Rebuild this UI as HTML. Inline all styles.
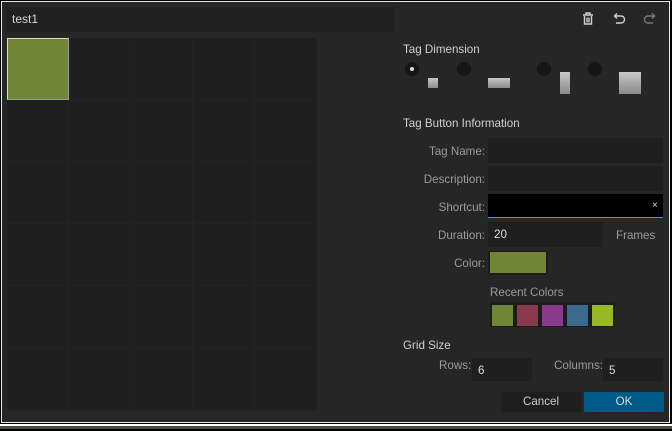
<!DOCTYPE html>
<html><head><style>
*{margin:0;padding:0;box-sizing:border-box}
body{width:672px;height:431px;background:#000;font-family:"Liberation Sans",sans-serif;font-size:11.6px;color:#b4b4b4;position:relative;overflow:hidden}
.win{position:absolute;left:1px;top:1px;width:669px;height:422px;border:1px solid #e8e8e8;background:#262626}
.a{position:absolute}
.in{position:absolute;background:#1f1f1f}
.lbl{position:absolute;text-align:right;color:#9a9a9a;width:100px}
.cell{position:absolute;width:61px;height:61px;background:#1f1f1f}
.sw{position:absolute;width:21px;height:21px;top:305px}
.dot{position:absolute;width:14px;height:14px;border-radius:50%;background:#161616}
.rect{position:absolute;background:linear-gradient(#c8c8c8,#8a8a8a)}
</style></head><body>
<div class="win"></div>
<div class="a" style="left:0;top:424px;width:672px;height:2px;background:#fff"></div>
<div class="a" style="left:0;top:426px;width:672px;height:3px;background:#4a4e3a"></div>
<div class="in" style="left:6px;top:7px;width:388px;height:25px;background:#202020"></div>
<div class="a" style="left:12px;top:12px;color:#d8d8d8;font-size:12px">test1</div>
<div class="a" style="left:7px;top:38px;width:311px;height:373px;background:#232323"></div>
<div id="g"></div>
<script>
var h='';for(var r=0;r<6;r++)for(var c=0;c<5;c++){h+='<div class="cell" style="left:'+(7+c*62)+'px;top:'+(38+r*62)+'px"></div>'}
document.getElementById('g').innerHTML=h;
</script>
<div class="a" style="left:7px;top:38px;width:62px;height:62px;background:#718537;border:1px solid #d8dcc8;border-right-color:#999;border-bottom-color:#999"></div>
<svg class="a" style="left:580px;top:11px" width="90" height="16" viewBox="0 0 90 16">
<g fill="none" stroke="#d0d0d0" stroke-width="1.4">
<path d="M3 4h10M6 4V2h4v2M4.5 5v8h7V5M7 6.5v5M9 6.5v5"/>
<path d="M35 5h6a3.5 3.5 0 0 1 0 7h-5M37 2.5L34.5 5 37 7.5"/>
<path stroke="#777" d="M74 5h-6a3.5 3.5 0 0 0 0 7h5M72 2.5L74.5 5 72 7.5"/>
</g></svg>
<div class="a" style="left:403px;top:43px;color:#d0d0d0">Tag Dimension</div>
<div class="dot" style="left:405px;top:62px"></div><div class="a" style="left:410px;top:67px;width:4px;height:4px;border-radius:50%;background:#ddd"></div>
<div class="dot" style="left:457px;top:62px"></div>
<div class="dot" style="left:537px;top:62px"></div>
<div class="dot" style="left:588px;top:62px"></div>
<div class="rect" style="left:428px;top:78px;width:10px;height:10px"></div>
<div class="rect" style="left:488px;top:78px;width:22px;height:10px"></div>
<div class="rect" style="left:560px;top:72px;width:10px;height:22px"></div>
<div class="rect" style="left:619px;top:72px;width:22px;height:22px"></div>
<div class="a" style="left:403px;top:117px;color:#d0d0d0">Tag Button Information</div>
<div class="lbl" style="left:385px;top:145px">Tag Name:</div>
<div class="in" style="left:488px;top:138px;width:175px;height:25px"></div>
<div class="lbl" style="left:385px;top:173px">Description:</div>
<div class="in" style="left:488px;top:166px;width:175px;height:25px"></div>
<div class="lbl" style="left:385px;top:201px">Shortcut:</div>
<div class="a" style="left:488px;top:194px;width:175px;height:24px;background:#000;border-bottom:1px solid #2ea4e0"></div>
<div class="a" style="left:652px;top:200px;color:#ddd;font-size:10px">×</div>
<div class="lbl" style="left:385px;top:229px">Duration:</div>
<div class="in" style="left:488px;top:222px;width:115px;height:25px"></div>
<div class="a" style="left:494px;top:228px;color:#ddd">20</div>
<div class="a" style="left:616px;top:229px;color:#9a9a9a">Frames</div>
<div class="lbl" style="left:385px;top:257px">Color:</div>
<div class="a" style="left:488px;top:251px;width:60px;height:24px;background:#1c1c1c"></div>
<div class="a" style="left:490px;top:252px;width:56px;height:21px;background:#718537"></div>
<div class="a" style="left:490px;top:286px;color:#9a9a9a">Recent Colors</div>
<div class="a" style="left:490px;top:302px;width:125px;height:25px;background:#1c1c1c"></div>
<div class="sw" style="left:492px;background:#718537"></div>
<div class="sw" style="left:517px;background:#8a3a4e"></div>
<div class="sw" style="left:542px;background:#8a3a8a"></div>
<div class="sw" style="left:567px;background:#3a6a8e"></div>
<div class="sw" style="left:592px;background:#98b826"></div>
<div class="a" style="left:403px;top:339px;color:#d0d0d0">Grid Size</div>
<div class="a" style="left:439px;top:359px;color:#9a9a9a">Rows:</div>
<div class="in" style="left:472px;top:358px;width:60px;height:23px"></div>
<div class="a" style="left:478px;top:364px;color:#ddd">6</div>
<div class="a" style="left:554px;top:359px;color:#9a9a9a">Columns:</div>
<div class="in" style="left:603px;top:358px;width:60px;height:23px"></div>
<div class="a" style="left:609px;top:364px;color:#ddd">5</div>
<div class="a" style="left:501px;top:392px;width:80px;height:20px;background:#1e1e1e;color:#ccc;text-align:center;line-height:20px">Cancel</div>
<div class="a" style="left:584px;top:392px;width:80px;height:20px;background:#005a87;color:#ddd;text-align:center;line-height:20px">OK</div>
</body></html>
